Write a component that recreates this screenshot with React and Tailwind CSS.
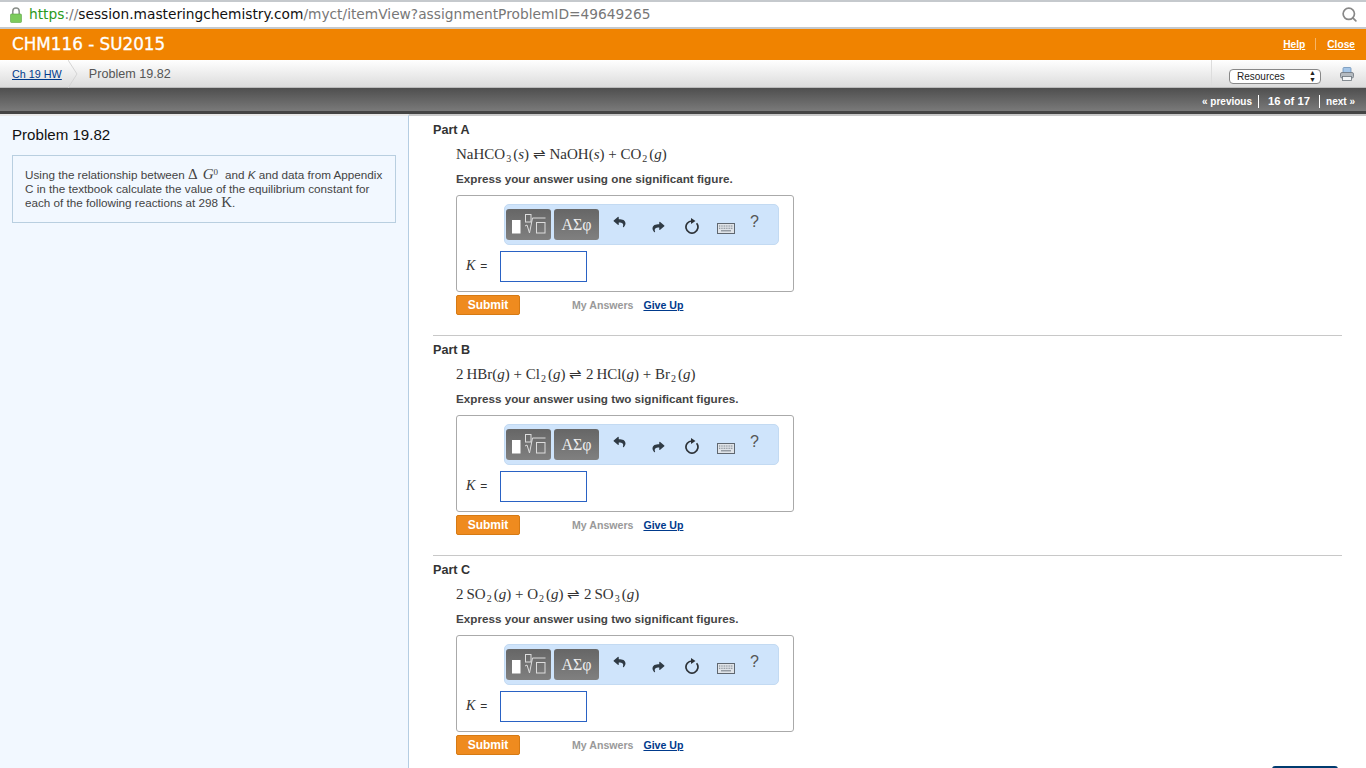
import { FaReply, FaShare } from "react-icons/fa";
import { Search } from "lucide-react";

const parts = [
    {
        name: "Part A",
        sig: "Express your answer using one significant figure.",
        eq: (
            <>
                NaHCO<sub className="text-[10px] static align-[-3px] ml-px">3</sub>
                <span className="ml-[2px]">(<i>s</i>)</span> ⇌ NaOH(<i>s</i>) + CO
                <sub className="text-[10px] static align-[-3px] ml-px">2</sub>
                <span className="ml-[2px]">(<i>g</i>)</span>
            </>
        ),
    },
    {
        name: "Part B",
        sig: "Express your answer using two significant figures.",
        eq: (
            <>
                2{"\u2009"}HBr(<i>g</i>) + Cl<sub className="text-[10px] static align-[-3px] ml-px">2</sub>
                <span className="ml-[2px]">(<i>g</i>)</span> ⇌ 2{"\u2009"}HCl(<i>g</i>) + Br
                <sub className="text-[10px] static align-[-3px] ml-px">2</sub>
                <span className="ml-[2px]">(<i>g</i>)</span>
            </>
        ),
    },
    {
        name: "Part C",
        sig: "Express your answer using two significant figures.",
        eq: (
            <>
                2{"\u2009"}SO<sub className="text-[10px] static align-[-3px] ml-px">2</sub>
                <span className="ml-[2px]">(<i>g</i>)</span> + O
                <sub className="text-[10px] static align-[-3px] ml-px">2</sub>
                <span className="ml-[2px]">(<i>g</i>)</span> ⇌ 2{"\u2009"}SO
                <sub className="text-[10px] static align-[-3px] ml-px">3</sub>
                <span className="ml-[2px]">(<i>g</i>)</span>
            </>
        ),
    },
];

function LockIcon() {
    return (
        <svg width="12" height="16" viewBox="0 0 12 16">
            <path d="M2.8 7V4.2a3.2 3.2 0 016.4 0V7" fill="none" stroke="#8a8f8a" strokeWidth="1.5" />
            <rect x="0.5" y="7" width="11" height="8.5" rx="1" fill="#7ccb5c" stroke="#5da544" strokeWidth="0.6" />
        </svg>
    );
}

function PrinterIcon() {
    return (
        <svg width="14" height="14" viewBox="0 0 14 14">
            <rect x="3" y="0.5" width="8" height="6" rx="1" fill="#a5c6e8" stroke="#6f93b8" strokeWidth="0.8" />
            <rect x="0.5" y="5.5" width="13" height="5.5" rx="1.5" fill="#b4bac0" stroke="#6c747c" strokeWidth="0.8" />
            <rect x="2.5" y="9.5" width="9" height="4" fill="#f4f6f8" stroke="#6c747c" strokeWidth="0.8" />
        </svg>
    );
}

function KeyboardIcon() {
    return (
        <svg width="18" height="11" viewBox="0 0 18 11" className="block">
            <rect x="0.5" y="0.5" width="17" height="10" fill="#dfe3e8" stroke="#5f6770" />
            <path d="M2 3h14M2 5.2h14" stroke="#7b838c" strokeWidth="1.1" strokeDasharray="1 0.7" />
            <path d="M4 7.8h10" stroke="#7b838c" strokeWidth="1.1" />
        </svg>
    );
}

function ResetIcon() {
    return (
        <svg width="16" height="16" viewBox="0 0 16 16" className="block">
            <path d="M8 3a6 6 0 1 0 4.6 2.2" fill="none" stroke="#2c3136" strokeWidth="1.7" />
            <path d="M7 0l4.5 3L7 6z" fill="#2c3136" />
        </svg>
    );
}

function TemplateIcon() {
    return (
        <svg width="45" height="31" viewBox="0 0 45 31" className="block">
            <rect x="6" y="11" width="8.5" height="13.5" fill="#fff" />
            <rect x="19.5" y="5.5" width="5.5" height="7.5" fill="none" stroke="#ddd" />
            <path d="M19 17l2-1 2.5 8 3-15h13" fill="none" stroke="#ddd" />
            <rect x="30.5" y="13.5" width="8.5" height="10.5" fill="none" stroke="#ddd" />
        </svg>
    );
}

function AnswerPart({ part, first, last }) {
    return (
        <section className={first ? "mx-6" : "mx-6 border-t border-[#c8c8c8]"}>
            <h3 className="pt-[6px] font-bold text-[12.6px] text-[#333] leading-4">{part.name}</h3>
            <div className="ml-[23px] mt-[4px] h-[24px] leading-[24px] font-['Liberation_Serif',serif] text-[15px] text-[#333]">
                {part.eq}
            </div>
            <p className="ml-[23px] mt-[5px] text-[11.7px] leading-4 font-bold text-[#444]">{part.sig}</p>
            <div className="ml-[23px] mt-[8px] w-[338px] h-[97px] border border-[#aaa] rounded-[3px] bg-white pt-2">
                <div className="ml-[47px] w-[275px] h-[41px] rounded-[5px] bg-[#cfe4fb] border border-[#c3daf2] flex pl-px pt-1 text-[#333]">
                    <div className="w-[45px] h-[31px] rounded-[3px] bg-gradient-to-b from-[#666] to-[#808080]">
                        <TemplateIcon />
                    </div>
                    <div className="ml-[3px] w-[45px] h-[31px] rounded-[3px] bg-gradient-to-b from-[#666] to-[#808080] flex items-center justify-center font-['Liberation_Serif',serif] text-[16px] text-[#eee]">
                        ΑΣφ
                    </div>
                    <FaReply className="ml-[14px] mt-[7px] w-[13px] h-[12px] text-[#2f3a44]" />
                    <FaShare className="ml-[26px] mt-[12px] w-[13px] h-[12px] text-[#2f3a44]" />
                    <div className="ml-[19px] mt-[9px]"><ResetIcon /></div>
                    <div className="ml-[17px] mt-[14px]"><KeyboardIcon /></div>
                    <span className="ml-[15px] mt-[3px] text-[16px] leading-5 text-[#555]">?</span>
                </div>
                <div className="flex mt-[6px] items-center">
                    <span className="ml-[9px] w-[34px] text-xs text-[#333]">
                        <i className="font-['Liberation_Serif',serif] text-[14px]">K</i>
                        <span className="ml-[5px]">=</span>
                    </span>
                    <div className="w-[87px] h-[31px] border border-[#2a62c4] bg-white" />
                </div>
            </div>
            <div className="ml-[23px] mt-[3px] flex items-center h-[20px]">
                <button className="w-[64px] h-[20px] rounded-[2px] bg-[#ef8b1f] border border-[#d67a14] text-white font-bold text-xs leading-none">
                    Submit
                </button>
                <span className="ml-[52px] pt-[2px] text-[10.6px] font-bold text-[#999]">My Answers</span>
                <a className="ml-[10px] pt-[2px] text-[10.6px] font-bold text-[#003a8c] underline" href="#">Give Up</a>
            </div>
            <div className={last ? "h-[11px]" : "h-[20px]"} />
        </section>
    );
}

export default function App() {
    return (
        <div className="w-[1366px] h-[768px] overflow-hidden bg-white flex flex-col font-['Liberation_Sans',Arial,sans-serif]">
            <div className="h-[29px] shrink-0 bg-white border-y-2 border-[#c5c9cd] flex items-center pl-[10px] pr-[8px]">
                <LockIcon />
                <div className="ml-[7px] flex-1 font-['DejaVu_Sans',sans-serif] text-[13.76px] text-[#777]">
                    <span className="text-[#2b9a1c]">https</span>://<span className="text-[#111]">session.masteringchemistry.com</span>/myct/itemView?assignmentProblemID=49649265
                </div>
                <Search className="w-[17px] h-[17px] text-[#888]" strokeWidth={2.4} />
            </div>
            <div className="h-[31px] shrink-0 bg-[#f08300] flex items-center justify-between pl-3 pr-[11px] text-white">
                <span className="font-['DejaVu_Sans',sans-serif] text-[16.8px] [-webkit-text-stroke:0.3px_white]">CHM116 - SU2015</span>
                <div className="flex items-center text-[10.2px] font-bold">
                    <a className="underline" href="#">Help</a>
                    <span className="ml-[10px] mr-[11px] h-[12px] border-l border-[#f7b566]" />
                    <a className="underline" href="#">Close</a>
                </div>
            </div>
            <div className="h-[28px] shrink-0 bg-gradient-to-b from-white to-[#dcdcdc] border-b border-[#bbb] flex items-center">
                <a className="ml-3 pt-px text-[10.8px] text-[#003a8c] underline" href="#">Ch 19 HW</a>
                <svg width="10" height="28" viewBox="0 0 10 28" className="ml-[6px]">
                    <path d="M0 0l9 14-9 14" fill="none" stroke="#d4d4d4" />
                </svg>
                <span className="ml-[11px] pt-px text-[12.6px] text-[#555]">Problem 19.82</span>
                <div className="ml-auto h-full border-l border-[#ddd] mr-[17px]" />
                <div className="w-[92px] h-[15px] mt-[5px] rounded-[4px] border border-[#888] bg-white flex items-center justify-between pl-[7px] pr-[4px] text-[10px] text-[#222]">
                    <span>Resources</span>
                    <span className="text-[7px] leading-[7px] flex flex-col">
                        <span>▲</span><span>▼</span>
                    </span>
                </div>
                <div className="ml-[19px] mr-[12px]"><PrinterIcon /></div>
            </div>
            <div className="h-[26px] shrink-0 bg-gradient-to-b from-[#4f4f4f] to-[#7a7a7a] border-b-[3px] border-[#444] flex items-center justify-end pt-[3px] pr-[11px] text-white text-[10px] font-bold">
                <span>« previous</span>
                <span className="mx-[6px] h-[13px] border-l border-white" />
                <span className="ml-[3px] text-[11.3px]">16 of 17</span>
                <span className="ml-[9px] mr-[6px] h-[13px] border-l border-white" />
                <span>next »</span>
            </div>
            <div className="flex-1 flex min-h-0">
                <aside className="w-[409px] shrink-0 bg-[#f2f8ff] border-r border-[#b5cde2] pl-3 pr-3 border-t-2 border-t-[#e8e8e8]">
                    <h2 className="mt-[9px] text-[15.1px] leading-5 text-[#111]">Problem 19.82</h2>
                    <div className="mt-[10px] w-[384px] h-[68px] border border-[#b9cfe0] pl-3 pt-[12px] text-[11.7px] leading-[14px] text-[#444]">
                        Using the relationship between{" "}
                        <span className="font-['Liberation_Serif',serif] text-[15px] leading-[10px]">Δ <i className="ml-[2px]">G</i><sup className="text-[9px] leading-none">0</sup></span>
                        <span className="ml-[7px]">and <i>K</i> and data from Appendix</span><br />
                        C in the textbook calculate the value of the equilibrium constant for<br />
                        each of the following reactions at 298{" "}
                        <span className="font-['Liberation_Serif',serif] text-[15px] leading-[10px]">K</span>.
                    </div>
                </aside>
                <main className="flex-1 border-t-2 border-[#c8c8c8] min-w-0 overflow-hidden">
                    {parts.map((part, i) => (
                        <AnswerPart key={part.name} part={part} first={i === 0} last={i === parts.length - 1} />
                    ))}
                    <div className="flex justify-end pr-7">
                        <div className="w-[66px] h-[4px] rounded-t-[3px] bg-[#003b6f]" />
                    </div>
                </main>
            </div>
        </div>
    );
}
